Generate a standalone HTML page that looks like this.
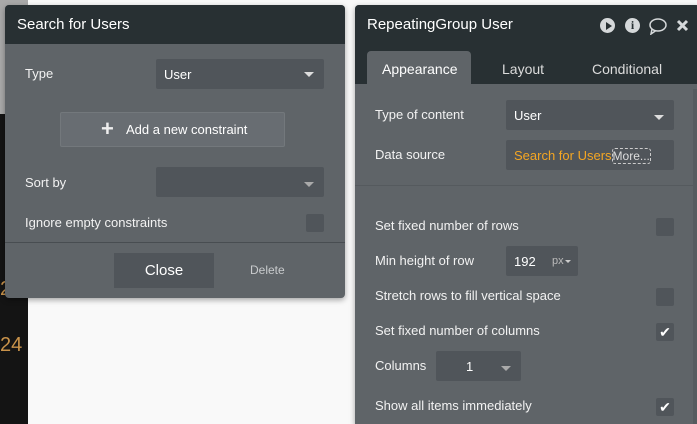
<!DOCTYPE html>
<html style="width:697px;height:424px;overflow:hidden"><head><style>
*{margin:0;padding:0;box-sizing:border-box}
body{width:697px;height:424px;overflow:hidden;background:#f9f9f9;font-family:"Liberation Sans",sans-serif;position:relative;color:#fff}
.abs{position:absolute}
.panel{position:absolute;background:#5f6468;border-radius:4px;box-shadow:0 2px 6px rgba(0,0,0,.35);overflow:hidden}
.hdr{position:absolute;left:0;top:0;right:0;height:39px;background:#283033;font-size:15px;padding:11px 12px}
.lbl{position:absolute;font-size:13px;color:#f2f2f2}
.dd{position:absolute;background:#50555a;border-radius:2px;font-size:13px;padding:8px 8px}
.car{position:absolute;width:0;height:0;border-left:5px solid transparent;border-right:5px solid transparent;border-top:5px solid #ddd}
.cb{position:absolute;width:18px;height:18px;background:#50555a;border-radius:2px}
</style></head><body>
<div class="abs" style="left:0;top:0;width:28px;height:114px;background:#a9a9a9"></div>
<div class="abs" style="left:0;top:114px;width:28px;height:310px;background:#141414"></div>
<div class="abs" style="left:0;top:278px;color:#c8924a;font-size:20px">2</div>
<div class="abs" style="left:0;top:334px;color:#c8924a;font-size:20px">24</div>

<div class="panel" style="left:5px;top:5px;width:340px;height:293px">
<div class="hdr">Search for Users</div>
<div class="lbl" style="left:20px;top:61px">Type</div>
<div class="dd" style="left:151px;top:54px;width:168px;height:30px">User</div>
<div class="car" style="left:299px;top:67px"></div>
<div class="abs" style="left:55px;top:107px;width:225px;height:35px;background:#686d72;border:1px solid #73787c;border-radius:2px;font-size:13px;padding:9px 0 0 40px"><span style="position:absolute;left:40px;top:3px;font-size:22px;font-weight:bold;color:#eee">+</span><span style="margin-left:25px">Add a new constraint</span></div>
<div class="lbl" style="left:20px;top:170px">Sort by</div>
<div class="dd" style="left:151px;top:162px;width:168px;height:30px"></div>
<div class="car" style="left:299px;top:177px;border-top-color:#aaa"></div>
<div class="lbl" style="left:20px;top:210px">Ignore empty constraints</div>
<div class="cb" style="left:301px;top:209px"></div>
<div class="abs" style="left:0;top:237px;width:340px;height:1px;background:#484d51"></div>
<div class="abs" style="left:109px;top:248px;width:100px;height:35px;background:#50555a;font-size:15px;text-align:center;padding-top:9px">Close</div>
<div class="abs" style="left:245px;top:258px;font-size:12px;color:#c9cbcd">Delete</div>
</div>

<div class="panel" style="left:355px;top:5px;width:345px;height:419px;border-radius:4px 4px 0 0">
<div class="hdr" style="height:39px">RepeatingGroup User</div>
<div class="abs" style="left:0;top:39px;width:342px;height:40px;background:#283033"></div>
<div class="abs" style="left:245px;top:13px;width:15px;height:15px;border-radius:50%;background:#d5d8da"></div>
<div class="abs" style="left:251px;top:17px;border-left:6px solid #283033;border-top:4px solid transparent;border-bottom:4px solid transparent;width:0;height:0"></div>
<div class="abs" style="left:270px;top:13px;width:15px;height:15px;border-radius:50%;background:#d5d8da;color:#283033;font-size:12px;font-weight:bold;text-align:center;line-height:15px;font-family:'Liberation Serif',serif">i</div>
<svg class="abs" style="left:293px;top:12px" width="20" height="18"><ellipse cx="10" cy="8" rx="8" ry="6" fill="none" stroke="#d5d8da" stroke-width="1.5"/><path d="M4 12 L3 17 L8 13.5" fill="none" stroke="#d5d8da" stroke-width="1.5"/></svg>
<svg class="abs" style="left:321px;top:14px" width="13" height="13"><path d="M2 2L11 11M11 2L2 11" stroke="#d5d8da" stroke-width="3"/></svg>
<div class="abs" style="left:12px;top:46px;width:104px;height:38px;background:#5f6468;border-radius:4px 4px 0 0;font-size:14px;padding:10px 0 0 15px">Appearance</div>
<div class="abs" style="left:147px;top:56px;font-size:14px;color:#dcdcdc">Layout</div>
<div class="abs" style="left:237px;top:56px;font-size:14px;color:#dcdcdc">Conditional</div>
<div class="abs" style="left:338px;top:84px;width:4px;height:340px;background:#565b5f"></div>
<div class="lbl" style="left:20px;top:102px">Type of content</div>
<div class="dd" style="left:151px;top:95px;width:168px;height:30px">User</div>
<div class="car" style="left:299px;top:110px"></div>
<div class="lbl" style="left:20px;top:142px">Data source</div>
<div class="dd" style="left:151px;top:135px;width:168px;height:30px;color:#f4a623;white-space:nowrap">Search for Users<span style="color:#ddd;border:1px dashed #ccc;border-radius:3px;font-size:12px">More...</span></div>
<div class="abs" style="left:0;top:180px;width:338px;height:1px;background:#555a5e"></div>
<div class="lbl" style="left:20px;top:213px">Set fixed number of rows</div>
<div class="cb" style="left:301px;top:213px"></div>
<div class="lbl" style="left:20px;top:248px">Min height of row</div>
<div class="dd" style="left:151px;top:241px;width:72px;height:30px">192<span style="position:absolute;left:46px;top:9px;font-size:11px;color:#bbb">px</span></div>
<div class="car" style="left:210px;top:255px;border-width:3px 3px 0;border-top-color:#ccc"></div>
<div class="lbl" style="left:20px;top:283px">Stretch rows to fill vertical space</div>
<div class="cb" style="left:301px;top:283px"></div>
<div class="lbl" style="left:20px;top:318px">Set fixed number of columns</div>
<div class="cb" style="left:301px;top:318px;color:#fff;font-size:14px;text-align:center;line-height:18px">✔</div>
<div class="lbl" style="left:20px;top:393px">Show all items immediately</div>
<div class="lbl" style="left:20px;top:353px">Columns</div>
<div class="dd" style="left:81px;top:346px;width:85px;height:30px;padding-left:30px">1</div>
<div class="car" style="left:146px;top:361px;border-top-color:#aaa"></div>
<div class="cb" style="left:301px;top:393px;color:#fff;font-size:14px;text-align:center;line-height:18px">✔</div>
</div>
</body></html>
